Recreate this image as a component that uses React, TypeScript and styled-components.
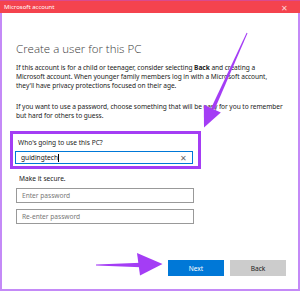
import React from "react";
import styled, { createGlobalStyle } from "styled-components";

const GlobalStyle = createGlobalStyle`
  html, body { margin: 0; padding: 0; background: #ffffff; }
  body { font-family: "Noto Sans", "Open Sans", sans-serif; }
`;

const Window = styled.div`
  position: relative;
  width: 300px;
  height: 291px;
  display: flex;
  flex-direction: column;
  overflow: hidden;
`;

const TitleBar = styled.div`
  height: 13px;
  flex: none;
  background: #f4434e;
  border-top: 1px solid #d94a8e;
  box-sizing: border-box;
  display: flex;
  align-items: center;
  justify-content: space-between;
  padding: 0 12px 0 4px;
  color: #ffffff;
  font-size: 6px;
`;

const CloseGlyph = styled.span`
  font-size: 8px;
  opacity: 0.75;
`;

const Body = styled.div`
  flex: 1;
  border: 2px solid #c48af7;
  border-top: none;
  padding: 0 0 0 14px;
  display: flex;
  flex-direction: column;
  color: #222;
`;

const Heading = styled.h1`
  margin: 29px 0 0 0;
  font-size: 11.5px;
  line-height: 14px;
  font-weight: 300;
  color: #3a3a3a;
  font-family: "Open Sans", "Noto Sans", sans-serif;
`;

const Para = styled.p<{ $top: number }>`
  margin: ${(p) => p.$top}px 0 0 0;
  font-size: 6.6px;
  line-height: 9.2px;
  letter-spacing: -0.05px;
  color: #222;
  white-space: nowrap;
  b { font-weight: 700; }
`;

const Highlight = styled.div`
  margin: 11px 0 0 -6px;
  width: 191px;
  box-sizing: border-box;
  border: 3px solid #a43df4;
  padding: 3.5px 5px 2px 2px;
  display: flex;
  flex-direction: column;
`;

const Label = styled.div<{ $top?: number }>`
  font-size: 6.6px;
  line-height: 9px;
  color: #222;
  margin: ${(p) => p.$top ?? 0}px 0 0 3px;
`;

const Field = styled.div<{ $active?: boolean; $top: number }>`
  margin-top: ${(p) => p.$top}px;
  width: 178px;
  height: ${(p) => (p.$active ? 13 : 15)}px;
  flex: none;
  box-sizing: border-box;
  border: 1px solid ${(p) => (p.$active ? "#0078d7" : "#999999")};
  display: flex;
  align-items: center;
  justify-content: space-between;
  padding: 0 5px 0 5px;
  font-size: 6.6px;
  color: ${(p) => (p.$active ? "#111" : "#777")};
  background: #fff;
`;

const Caret = styled.span`
  display: inline-block;
  width: 0.6px;
  height: 8px;
  background: #000;
  vertical-align: middle;
`;

const ClearGlyph = styled.span`
  font-size: 8px;
  color: #666;
`;

const Footer = styled.div`
  margin-top: auto;
  margin-bottom: 13px;
  display: flex;
  justify-content: flex-end;
  gap: 6px;
  padding-right: 12px;
`;

const Button = styled.div<{ $primary?: boolean }>`
  width: 56px;
  height: 16px;
  display: flex;
  align-items: center;
  justify-content: center;
  font-size: 6.6px;
  background: ${(p) => (p.$primary ? "#0078d7" : "#cccccc")};
  color: ${(p) => (p.$primary ? "#ffffff" : "#222")};
`;

const Overlay = styled.svg`
  position: absolute;
  left: 0;
  top: 0;
  width: 300px;
  height: 291px;
  pointer-events: none;
`;

export default function App() {
  return (
    <>
      <GlobalStyle />
      <Window>
        <TitleBar>
          <span>Microsoft account</span>
          <CloseGlyph>✕</CloseGlyph>
        </TitleBar>
        <Body>
          <Heading>Create a user for this PC</Heading>
          <Para $top={7}>
            If this account is for a child or teenager, consider selecting <b>Back</b> and creating a
            <br />
            Microsoft account. When younger family members log in with a Microsoft account,
            <br />
            they'll have privacy protections focused on their age.
          </Para>
          <Para $top={11}>
            If you want to use a password, choose something that will be easy for you to remember
            <br />
            but hard for others to guess.
          </Para>
          <Highlight>
            <Label>Who's going to use this PC?</Label>
            <Field $active $top={4.5}>
              <span>
                guidingtech<Caret />
              </span>
              <ClearGlyph>✕</ClearGlyph>
            </Field>
          </Highlight>
          <Label $top={4.5}>Make it secure.</Label>
          <Field $top={5.5}>Enter password</Field>
          <Field $top={6}>Re-enter password</Field>
          <Footer>
            <Button $primary>Next</Button>
            <Button>Back</Button>
          </Footer>
        </Body>
        <Overlay viewBox="0 0 300 291">
          <g fill="#a43df5">
            <polygon points="247.5,33.2 246.6,32.8 211.2,108.0 214.6,109.5" />
            <polygon points="220.8,112.6 203.8,104.8 204,127.5" />
            <polygon points="96,265.4 96,264.6 141,262.8 141,267.2" />
            <polygon points="137,253 140,275.5 162.5,264" />
          </g>
        </Overlay>
      </Window>
    </>
  );
}
